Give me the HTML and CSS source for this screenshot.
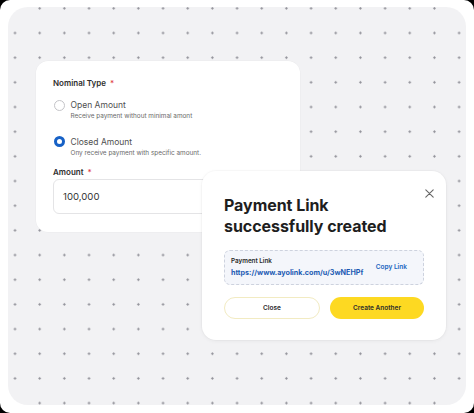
FILE: index.html
```html
<!DOCTYPE html>
<html lang="en">
<head>
<meta charset="utf-8">
<title>Payment Link</title>
<link rel="stylesheet" href="styles.css">
</head>
<body>
<div class="frame">
  <div class="panel">
    <section class="form-card">
      <div class="field-label">Nominal Type <span class="req">*</span></div>
      <div class="option option-first">
        <span class="radio"></span>
        <div class="option-text">
          <div class="option-title">Open Amount</div>
          <div class="option-sub">Receive payment without minimal amont</div>
        </div>
      </div>
      <div class="option option-second">
        <span class="radio radio-checked"></span>
        <div class="option-text">
          <div class="option-title">Closed Amount</div>
          <div class="option-sub">Ony receive payment with specific amount.</div>
        </div>
      </div>
      <div class="field-label amount-label">Amount <span class="req">*</span></div>
      <div class="input">100,000</div>
    </section>

    <section class="modal">
      <button class="modal-close" aria-label="Close">
        <svg width="9" height="9" viewBox="0 0 9 9"><path d="M0.8 0.8 L8.2 8.2 M8.2 0.8 L0.8 8.2" stroke="#666" stroke-width="1.1" stroke-linecap="round"/></svg>
      </button>
      <h1 class="modal-title">Payment Link<br>successfully created</h1>
      <div class="link-box">
        <div class="link-info">
          <div class="link-label">Payment Link</div>
          <div class="link-url">https://www.ayolink.com/u/3wNEHPf</div>
        </div>
        <div class="copy-link">Copy Link</div>
      </div>
      <div class="actions">
        <button class="btn btn-outline">Close</button>
        <button class="btn btn-primary">Create Another</button>
      </div>
    </section>
  </div>
</div>
</body>
</html>
```

FILE: styles.css
```css
* { box-sizing: border-box; }
html, body { margin: 0; padding: 0; background: #000; }
body { font-family: Inter, "Noto Sans", sans-serif; }

.frame {
  width: 474px;
  height: 413px;
  background: #ffffff;
  border-radius: 10px;
  padding: 7px 8px 8px 8px;
}

.panel {
  position: relative;
  width: 458px;
  height: 398px;
  border-radius: 20px;
  background-color: #f2f2f4;
  background-image: radial-gradient(circle, #8e8e96 0, #8e8e96 0.85px, rgba(142,142,150,0) 1.45px);
  background-size: 24.68px 24.68px;
  background-position: -5.34px 13.66px;
  padding: 54px 0 0 28px;
}

.form-card {
  width: 264px;
  height: 171px;
  background: #fff;
  border-radius: 12px;
  padding: 16px 17px 0 17px;
  box-shadow: 0 0 0 0.5px rgba(0,0,0,0.03);
}

.field-label {
  font-size: 8px;
  line-height: 12px;
  font-weight: 600;
  color: #2e2e2e;
}
.req { color: #e0393e; font-weight: 500; margin-left: 2px; }

.option { display: flex; align-items: flex-start; gap: 6px; padding-left: 0.5px; }
.option-first { margin-top: 10px; }
.option-second { margin-top: 14.7px; }

.radio {
  width: 11px;
  height: 11px;
  border-radius: 50%;
  border: 1px solid #c4c4c8;
  background: #fff;
  margin-top: 0.5px;
  flex: none;
}
.radio-checked {
  border: 3px solid #1761c6;
}

.option-title {
  font-size: 8.5px;
  line-height: 12px;
  color: #505050;
}
.option-sub {
  font-size: 6.4px;
  line-height: 10px;
  color: #6a6a6a;
}

.amount-label { margin-top: 8px; }

.input {
  margin-top: 1.6px;
  width: 230px;
  height: 35px;
  border: 1px solid #e4e4e6;
  border-radius: 6px;
  padding-left: 9px;
  font-size: 9.6px;
  line-height: 33px;
  color: #333;
}

.modal {
  position: absolute;
  left: 194px;
  top: 164px;
  width: 244px;
  height: 169px;
  background: #fff;
  border-radius: 14px;
  padding: 23.5px 22px 22px 22px;
  box-shadow: 0 1px 4px rgba(0,0,0,0.05), 0 0 0 1px rgba(0,0,0,0.02);
}

.modal-close {
  position: absolute;
  right: 12.5px;
  top: 18.2px;
  width: 9px;
  height: 9px;
  padding: 0;
  border: 0;
  background: none;
  display: flex;
}

.modal-title {
  margin: 0;
  font-size: 16px;
  line-height: 21px;
  font-weight: 700;
  color: #1e1e1e;
  letter-spacing: -0.05px;
}

.link-box {
  margin-top: 13px;
  height: 35px;
  border: 1px dashed #cdd2de;
  border-radius: 6px;
  background: #f4f6fb;
  display: flex;
  align-items: center;
  justify-content: space-between;
  padding: 0 16px 0 6px;
}
.link-label {
  font-size: 6.3px;
  line-height: 9px;
  font-weight: 600;
  color: #2a2a2a;
}
.link-url {
  margin-top: 1px;
  font-size: 7.2px;
  line-height: 11px;
  font-weight: 700;
  color: #1c5bb3;
}
.copy-link {
  font-size: 6.5px;
  font-weight: 600;
  color: #2065c0;
}

.actions {
  margin-top: 12px;
  display: flex;
  gap: 10px;
}
.btn {
  flex: 1;
  height: 22px;
  border-radius: 11px;
  font-family: inherit;
  font-size: 6.5px;
  font-weight: 600;
  color: #2c2c2c;
  padding: 0;
}
.btn-outline {
  background: #fff;
  border: 1px solid #f2ebc2;
}
.btn-primary {
  background: #fdd922;
  border: 0;
}
```
